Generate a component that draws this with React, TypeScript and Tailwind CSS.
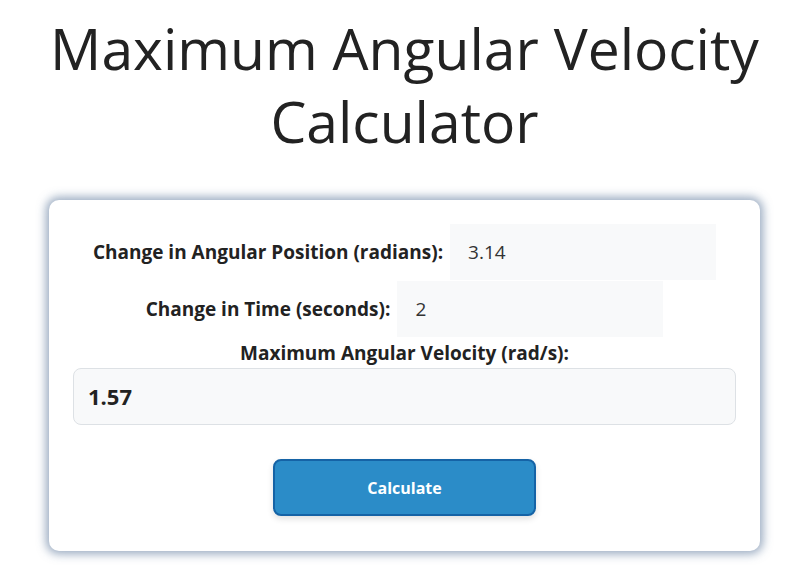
import React, { useState } from 'react';

const font = { fontFamily: '"Open Sans", "Noto Sans", Arial, sans-serif' };

function InputRow({
  label,
  value,
  onChange,
}: {
  label: string;
  value: string;
  onChange: (v: string) => void;
}) {
  return (
    <div className="flex items-center justify-center gap-[7px]">
      <label className="text-[19px] leading-[22px] font-bold text-[#222]">{label}</label>
      <input
        type="text"
        value={value}
        onChange={(e) => onChange(e.target.value)}
        className="h-[56px] w-[266px] bg-[#f8f9fa] px-[18px] text-[19px] text-[#333] outline-none"
      />
    </div>
  );
}

export default function App() {
  const [angle, setAngle] = useState('3.14');
  const [time, setTime] = useState('2');
  const [result, setResult] = useState('1.57');

  const calculate = () => {
    const a = parseFloat(angle);
    const t = parseFloat(time);
    if (!isNaN(a) && !isNaN(t) && t !== 0) {
      setResult(String(Math.round((a / t) * 100) / 100));
    }
  };

  return (
    <div className="min-h-screen bg-white pl-[9px] flex flex-col items-center" style={font}>
      <h1 className="mt-[12px] text-center text-[57px] leading-[73px] font-normal text-[#222]">
        Maximum Angular Velocity
        <br />
        Calculator
      </h1>

      {/* Calculator card */}
      <div className="mt-[42px] w-[711px] rounded-[10px] bg-white px-[24px] pt-[24px] pb-[35px] shadow-[0_0_10px_3px_rgba(70,100,140,0.55)]">
        <InputRow label="Change in Angular Position (radians):" value={angle} onChange={setAngle} />
        <div className="mt-[1px]">
          <InputRow label="Change in Time (seconds):" value={time} onChange={setTime} />
        </div>

        <div className="mt-[5px] text-center text-[19px] leading-[22px] font-bold text-[#222]">
          Maximum Angular Velocity (rad/s):
        </div>
        <div className="mt-[4px] flex h-[57px] items-center rounded-[8px] border border-[#dde1e5] bg-[#f8f9fa] px-[14px] text-[22px] font-bold text-[#222]">
          {result}
        </div>

        <div className="mt-[34px] flex justify-center">
          <button
            onClick={calculate}
            className="h-[57px] w-[263px] rounded-[8px] border-2 border-[#1563a6] bg-[#2b8cc8] text-[16px] font-bold text-white shadow-[0_3px_6px_rgba(0,0,0,0.12)]"
          >
            Calculate
          </button>
        </div>
      </div>
    </div>
  );
}
